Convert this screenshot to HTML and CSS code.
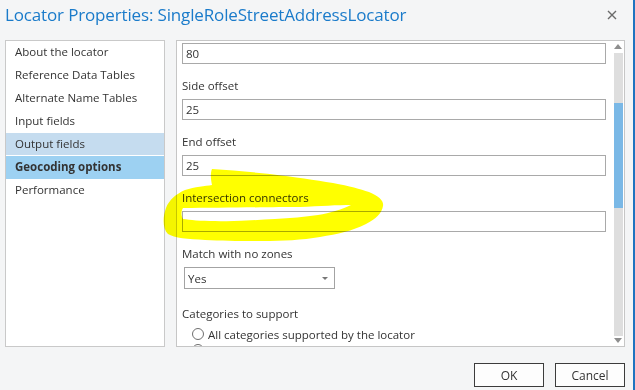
FILE: index.html
```html
<!DOCTYPE html>
<html lang="en">
<head>
  <meta charset="UTF-8" />
  <title>Locator Properties</title>
  <link rel="stylesheet" href="styles.css">
</head>
<body>

<div class="window">
  <div class="titlebar">
    <span class="title">Locator Properties: SingleRoleStreetAddressLocator</span>
    <svg class="close" width="10" height="10" viewBox="0 0 10 10">
      <path d="M1 1 L9 9 M9 1 L1 9" stroke="#6a6a6a" stroke-width="1.4" fill="none"/>
    </svg>
  </div>

  <div class="main">
    <ul class="nav">
      <li>About the locator</li>
      <li>Reference Data Tables</li>
      <li>Alternate Name Tables</li>
      <li>Input fields</li>
      <li class="hover">Output fields</li>
      <li class="active">Geocoding options</li>
      <li>Performance</li>
    </ul>

    <div class="pane">
      <div class="pane-content">
        <div class="textbox">80</div>

        <div class="label">Side offset</div>
        <div class="textbox">25</div>

        <div class="label">End offset</div>
        <div class="textbox">25</div>

        <div class="label">Intersection connectors</div>
        <div class="textbox"></div>

        <div class="label">Match with no zones</div>
        <div class="dropdown">
          <span>Yes</span>
          <span class="caret"></span>
        </div>

        <div class="label section">Categories to support</div>
        <div class="radio"><span class="dot"></span>All categories supported by the locator</div>
        <div class="radio"><span class="dot"></span>Only categories selected below</div>
      </div>

      <div class="scrollbar">
        <span class="arrow up"></span>
        <div class="track">
          <div class="thumb"></div>
        </div>
        <span class="arrow down"></span>
      </div>
    </div>
  </div>

  <div class="actions">
    <button class="btn">OK</button>
    <button class="btn">Cancel</button>
  </div>

  <!-- highlighter mark drawn over the dialog -->
  <svg class="marker" width="635" height="390" viewBox="0 0 635 390">
    <path fill="#ffff00" fill-rule="evenodd" d="
      M212,169 C230,170 250,172 270,174 C295,177 315,180 333,183 C350,186 360,189 369,192
      C379,196 384,201 383,206 C382,213 376,219 366,224 C352,231 338,234 320,237
      C302,240 283,241 262,241 C240,241 222,241 205,240 C188,239 174,238 168,234
      C162,228 163,216 166,208 C169,200 176,194 185,190 C195,187 205,186 212,185
      C211,180 210,174 212,169 Z
      M183,208 C220,208 270,207 300,207 C320,206 338,205 351,205
      C343,209 330,213 318,215 C305,217 290,218 275,219 C255,220 235,222 215,221
      C200,221 190,220 183,219 C181,216 181,211 183,208 Z"/>
  </svg>
</div>

</body>
</html>
```

FILE: styles.css
```css
* {
  box-sizing: border-box;
}
body {
  margin: 0;
  padding: 0;
  background: #f3f4f5;
  font-family: 'Open Sans', 'Noto Sans', sans-serif;
  color: #333;
}
.window {
  position: relative;
  width: 635px;
  height: 390px;
  background: #f4f5f6;
  border-right: 2px solid #1f74c0;
  padding-left: 5px;
  overflow: hidden;
}
.titlebar {
  display: flex;
  align-items: center;
  justify-content: space-between;
  height: 40px;
  padding-bottom: 11px;
  padding-right: 16px;
}
.title {
  font-size: 17px;
  color: #1a7bca;
  letter-spacing: -0.15px;
}
.close {
  display: block;
}
.main {
  display: flex;
  gap: 11px;
  height: 307px;
}
.nav {
  list-style: none;
  margin: 0;
  padding: 0;
  width: 160px;
  background: white;
  border: 1px solid #c9c9c9;
}
.nav li {
  height: 23px;
  line-height: 22px;
  padding-left: 9px;
  font-size: 11.5px;
  color: #333;
}
.nav li.hover {
  background: #c5dcef;
  border-bottom: 1px solid #fff;
}
.nav li.active {
  background: #9dd1f2;
  font-weight: bold;
}
.pane {
  display: flex;
  width: 449px;
  background: white;
  border: 1px solid #c6c6c6;
  overflow: hidden;
}
.pane-content {
  flex: 1;
  padding: 2px 7px 0 5px;
  font-size: 11.5px;
}
.textbox {
  height: 21px;
  border: 1px solid #a9a9a9;
  padding-left: 3px;
  line-height: 19px;
  color: #333;
}
.label {
  height: 20px;
  line-height: 19px;
  margin-top: 12px;
  margin-bottom: 3px;
}
.dropdown {
  display: flex;
  align-items: center;
  justify-content: space-between;
  width: 151px;
  height: 22px;
  margin-left: 2px;
  padding: 0 6px 0 3px;
  border: 1px solid #a3a3a3;
}
.caret {
  width: 0;
  height: 0;
  border-left: 3px solid transparent;
  border-right: 3px solid transparent;
  border-top: 3px solid #777;
}
.label.section {
  margin-top: 15px;
  margin-bottom: 2px;
}
.radio {
  display: flex;
  align-items: center;
  height: 16px;
  padding-left: 10px;
  gap: 4px;
}
.dot {
  width: 12px;
  height: 12px;
  border: 1px solid #6f6f6f;
  border-radius: 50%;
  background: white;
}
.scrollbar {
  display: flex;
  flex-direction: column;
  align-items: center;
  width: 10px;
  margin-right: 1px;
  padding: 3px 0 3px;
}
.arrow {
  width: 0;
  height: 0;
  border-left: 4px solid transparent;
  border-right: 4px solid transparent;
}
.arrow.up {
  border-bottom: 5px solid #8e8e8e;
  margin-bottom: 4px;
}
.arrow.down {
  border-top: 5px solid #8e8e8e;
  margin-top: 2px;
}
.track {
  flex: 1;
  width: 9px;
  background: #dedede;
  padding-top: 50px;
}
.thumb {
  height: 105px;
  background: #7ab8e6;
}
.actions {
  display: flex;
  justify-content: flex-end;
  gap: 11px;
  margin-top: 16px;
  padding-right: 8px;
}
.btn {
  width: 70px;
  height: 24px;
  background: #fdfdfd;
  border: 1px solid #3c3c3c;
  font-family: 'Open Sans', 'Noto Sans', sans-serif;
  font-size: 12px;
  color: #333;
  padding: 0;
}
.marker {
  position: absolute;
  left: 0;
  top: 0;
  pointer-events: none;
  mix-blend-mode: multiply;
}
```
